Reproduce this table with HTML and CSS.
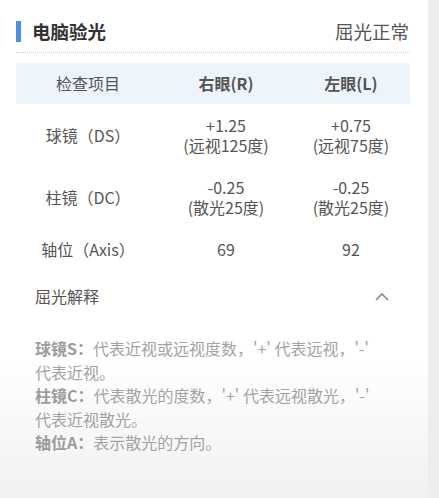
FILE: index.html
```html
<!DOCTYPE html>
<html lang="zh-CN">
<head>
<meta charset="utf-8">
<link rel="stylesheet" href="styles.css">
</head>
<body>
<div class="card">
  <div class="head">
    <div class="title"><span class="bar"></span>电脑验光</div>
    <div class="status">屈光正常</div>
  </div>
  <div class="dots"></div>
  <div class="table">
    <div class="row thead">
      <div class="cell">检查项目</div>
      <div class="cell strong">右眼(R)</div>
      <div class="cell strong">左眼(L)</div>
    </div>
    <div class="row">
      <div class="cell">球镜（DS）</div>
      <div class="cell">+1.25<br>(远视125度)</div>
      <div class="cell">+0.75<br>(远视75度)</div>
    </div>
    <div class="row">
      <div class="cell">柱镜（DC）</div>
      <div class="cell">-0.25<br>(散光25度)</div>
      <div class="cell">-0.25<br>(散光25度)</div>
    </div>
    <div class="row">
      <div class="cell">轴位（Axis）</div>
      <div class="cell">69</div>
      <div class="cell">92</div>
    </div>
  </div>
  <div class="explain">
    <div class="explain-head">
      <span>屈光解释</span>
      <svg class="chev" width="14" height="9" viewBox="0 0 14 9"><path d="M1 8 L7 2 L13 8" fill="none" stroke="#8a8a8a" stroke-width="1.6"/></svg>
    </div>
    <div class="explain-body">
      <p><b>球镜S：</b>代表近视或远视度数，'+' 代表远视，'-' 代表近视。</p>
      <p><b>柱镜C：</b>代表散光的度数，'+' 代表远视散光，'-' 代表近视散光。</p>
      <p><b>轴位A：</b>表示散光的方向。</p>
    </div>
  </div>
</div>
</body>
</html>
```
FILE: styles.css
```css
html, body {
  margin: 0;
  padding: 0;
}
body {
  background: #ededed;
  font-family: "Noto Sans CJK SC", "Noto Sans", sans-serif;
  width: 439px;
  height: 498px;
  overflow: hidden;
}
.card {
  width: 428px;
  height: 498px;
  box-sizing: border-box;
  padding: 14px 18px 0 16px;
  background: linear-gradient(to bottom, #ffffff 0, #ffffff 360px, #f1f1f1 498px);
}
.head {
  display: flex;
  align-items: center;
  justify-content: space-between;
  height: 34px;
}
.title {
  display: flex;
  align-items: center;
  font-size: 18.5px;
  font-weight: 700;
  color: #333;
}
.bar {
  width: 5px;
  height: 21px;
  background: #4a90e2;
  margin-right: 11px;
}
.status {
  font-size: 18.5px;
  color: #555;
  margin-right: 1px;
}
.dots {
  margin-top: 4px;
  border-top: 1.5px dotted #cfcfcf;
}
.table {
  margin-top: 10px;
}
.row {
  display: grid;
  grid-template-columns: 144px 132px 1fr;
  align-items: center;
  padding: 11px 0;
  font-size: 16px;
  line-height: 20px;
  color: #555;
  text-align: center;
}
.thead {
  background: #edf4fc;
  padding: 10px 0 11px;
}
.cell {
  text-align: center;
}
.cell.strong {
  font-weight: 600;
}
.explain {
  padding: 0 21px 0 19px;
}
.explain-head {
  display: flex;
  align-items: center;
  justify-content: space-between;
  height: 52px;
  font-size: 16px;
  color: #555;
}
.explain-body {
  padding-top: 15px;
  padding-right: 10px;
  font-size: 16px;
  line-height: 23.5px;
  color: #a3a3a3;
}
.explain-body p {
  margin: 0;
}
.explain-body b {
  font-weight: 700;
  color: #9c9c9c;
}
```
